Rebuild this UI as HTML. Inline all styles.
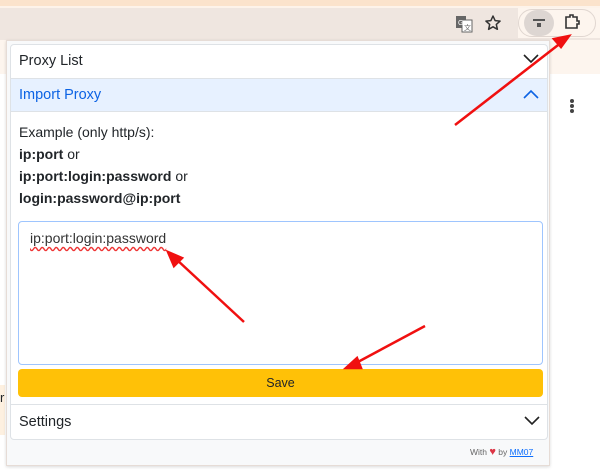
<!DOCTYPE html>
<html><head><meta charset="utf-8"><style>
*{box-sizing:border-box;margin:0;padding:0}
body{width:600px;height:474px;overflow:hidden;background:#fff;font-family:"Liberation Sans",sans-serif;position:relative;color:#212529}
.abs{position:absolute}
</style></head><body>
<div class="abs" style="left:0;top:0;width:600px;height:6px;background:#fbe3cc"></div>
<div class="abs" style="left:0;top:6px;width:600px;height:2px;background:#fdf3ea"></div>
<div class="abs" style="left:0;top:8px;width:600px;height:32px;background:#efe6e0"></div>
<div class="abs" style="left:430px;top:8px;width:85px;height:32px;background:#efe6e0;border-radius:0 16px 16px 0"></div>
<div class="abs" style="left:0;top:40px;width:600px;height:34px;background:#fdf5ee"></div>
<div class="abs" style="left:518px;top:8px;width:82px;height:30px;background:#fdf5ee"></div>
<div class="abs" style="left:518px;top:9px;width:78px;height:28px;border:1px solid #e0d6d0;border-radius:14px;background:#fdf5ee"></div>
<div class="abs" style="left:524px;top:10px;width:30px;height:26px;border-radius:13px;background:#ddd6d2"></div>
<svg class="abs" style="left:530px;top:14px" width="18" height="18"><rect x="3" y="5" width="12" height="2" fill="#555"/><rect x="7" y="9" width="4" height="4" fill="#555"/></svg>
<svg class="abs" style="left:562px;top:12px" width="20" height="20"><path d="M4 5h4v-2h3v2h4v4h2v3h-2v4H4z" fill="none" stroke="#333" stroke-width="1.6"/></svg>
<svg class="abs" style="left:454px;top:14px" width="20" height="20"><rect x="2" y="2" width="10" height="12" fill="#666"/><rect x="8" y="6" width="10" height="12" fill="#fff" stroke="#666"/><text x="4" y="11" font-size="7" fill="#fff">G</text><text x="10" y="16" font-size="7" fill="#666">文</text></svg>
<svg class="abs" style="left:484px;top:14px" width="18" height="18"><path d="M9 2l2.1 4.6 5 .5-3.8 3.3 1.1 4.9L9 12.8 4.6 15.3l1.1-4.9L1.9 7.1l5-.5z" fill="none" stroke="#333" stroke-width="1.5" stroke-linejoin="round"/></svg>
<div class="abs" style="left:570px;top:99px;width:4px;height:4px;border-radius:2px;background:#444;box-shadow:0 5px 0 #444,0 10px 0 #444"></div>
<div class="abs" style="left:0;top:385px;width:5px;height:50px;background:#fdf0e0"></div>
<div class="abs" style="left:0;top:390px;font-size:13px">r</div>

<div class="abs" style="left:6px;top:40px;width:544px;height:426px;background:#f8f9fa;border:1px solid #e6dcd6;box-shadow:0 1px 3px rgba(0,0,0,.15)"></div>
<div class="abs" style="left:10px;top:44px;width:538px;height:396px;background:#fff;border:1px solid #dee2e6;border-radius:4px;overflow:hidden">
 <div style="height:34px;border-bottom:1px solid #dee2e6;padding:8px 8px;font-size:14.5px">Proxy List</div>
 <div style="height:33px;background:#e7f1ff;padding:8px 8px;font-size:14.5px;color:#0c63e4;border-bottom:1px solid #dee2e6">Import Proxy</div>
 <div style="padding:9px 8px 0;font-size:14px;line-height:22px">Example (only http/s):<br><b>ip:port</b> or<br><b>ip:port:login:password</b> or<br><b>login:password@ip:port</b></div>
 <div class="abs" style="left:7px;top:176px;width:525px;height:144px;border:1px solid #9ec5fe;border-radius:4px;padding:8px 11px;font-size:14px;color:#333"><span style="text-decoration:underline wavy #e33;text-underline-offset:3px">ip:port:login:password</span></div>
 <div class="abs" style="left:7px;top:324px;width:525px;height:28px;background:#ffc107;border-radius:4px;text-align:center;line-height:28px;font-size:12.5px">Save</div>
 <div class="abs" style="left:0;top:359px;width:538px;border-top:1px solid #dee2e6;height:37px;padding:9px 8px;font-size:14.5px">Settings</div>
 <svg class="abs" style="left:512px;top:370px" width="18" height="12"><path d="M2 2l7 7 7-7" fill="none" stroke="#222" stroke-width="1.6"/></svg>
</div>
<svg class="abs" style="left:522px;top:53px" width="18" height="12"><path d="M2 2l7 7 7-7" fill="none" stroke="#222" stroke-width="1.6"/></svg>
<svg class="abs" style="left:522px;top:88px" width="18" height="12"><path d="M2 10l7-7 7 7" fill="none" stroke="#0c63e4" stroke-width="1.6"/></svg>
<div class="abs" style="left:470px;top:446px;font-size:8.5px;color:#666">With <span style="color:#dc3545;font-size:11px">♥</span> by <span style="color:#0d6efd;text-decoration:underline">MM07</span></div>

<svg class="abs" style="left:0;top:0" width="600" height="474">
<g stroke="#f01010" stroke-width="2.5" fill="#f01010">
<line x1="455" y1="125" x2="562" y2="42"/><path d="M569 36l-15 3 7 8z"/>
<line x1="244" y1="322" x2="176" y2="259"/><path d="M168 252l6 14 8-8z"/>
<line x1="425" y1="326" x2="356" y2="363"/><path d="M346 368l15 0-4-10z"/>
</g></svg>
</body></html>
